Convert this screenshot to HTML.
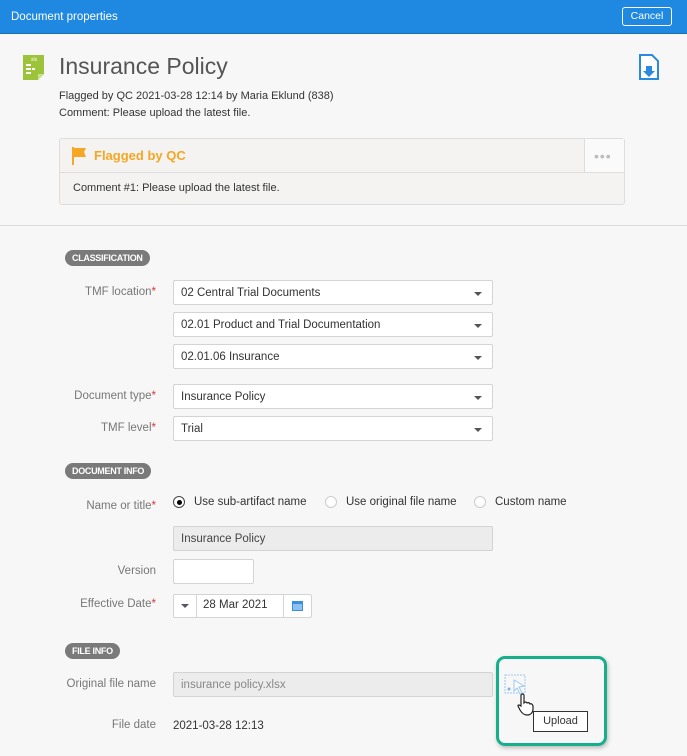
<!DOCTYPE html>
<html><head><style>
body{margin:0;width:687px;height:756px;background:#f7f7f7;font-family:"Liberation Sans",sans-serif;position:relative;overflow:hidden;color:#333}
.a{position:absolute}
.hdr{left:0;top:0;width:687px;height:33px;background:#1f88e0;border-bottom:1px solid #1a6fb8}
.pill{background:#7a7a7a;color:#fff;font-size:9px;font-weight:bold;height:16px;line-height:16px;border-radius:8px;padding:0 7px;letter-spacing:-.3px}
.lbl{font-size:11.5px;color:#777;text-align:right;width:120px;left:36px}
.lbl b{color:#d9343a;font-weight:normal}
.sel{left:173px;background:#fff;border:1px solid #d4d4d4;border-radius:2px;font-size:11.5px;line-height:24px;padding-left:7px;box-sizing:border-box;width:320px;height:25px}
.sel:after{content:"";position:absolute;right:10px;top:11px;border-left:4px solid transparent;border-right:4px solid transparent;border-top:4px solid #555}
.sel.n:after{display:none}
.rad{width:12px;height:12px;border:1px solid #ccc;border-radius:50%;background:#fff;box-sizing:border-box}
.t{font-size:11.5px}
</style></head><body>
<div class="a hdr"></div>
<div class="a" style="left:11px;top:11px;color:#fff;font-size:11.5px">Document properties</div>
<div class="a" style="left:622px;top:7px;width:50px;height:19px;border:1px solid #fff;border-radius:3px;box-sizing:border-box;color:#fff;font-size:10.5px;text-align:center;line-height:17px">Cancel</div>

<svg class="a" style="left:23px;top:55px" width="21" height="25"><path d="M0 0H21V19L15 25H0Z" fill="#9dc33b"/><path d="M21 19L15 25V19Z" fill="#c8e08a"/><rect x="3" y="9" width="5" height="2" fill="#fff"/><rect x="3" y="13" width="5" height="2" fill="#fff"/><rect x="3" y="17" width="5" height="2" fill="#fff"/><rect x="9" y="13" width="3" height="2" fill="#fff"/><text x="8" y="6" font-size="5" fill="#fff" font-family="Liberation Sans">xls</text></svg>
<div class="a" style="left:59px;top:53px;font-size:23px;color:#555">Insurance Policy</div>
<svg class="a" style="left:638px;top:54px" width="22" height="26"><path d="M2 1H14L20 7V25H2Z" fill="#fff" stroke="#2a8ae0" stroke-width="2"/><path d="M8 12H14V17H17L11 23L5 17H8Z" fill="#2a8ae0"/></svg>
<div class="a t" style="left:59px;top:90px;font-size:11px">Flagged by QC 2021-03-28 12:14 by Maria Eklund (838)</div>
<div class="a t" style="left:59px;top:107px;font-size:11px">Comment: Please upload the latest file.</div>

<div class="a" style="left:59px;top:138px;width:566px;height:67px;border:1px solid #ddd;border-radius:3px;box-sizing:border-box;background:#f4f3f2"></div>
<div class="a" style="left:60px;top:172px;width:564px;height:1px;background:#ddd"></div>
<div class="a" style="left:584px;top:139px;width:1px;height:33px;background:#ddd"></div>
<div class="a" style="left:585px;top:139px;width:39px;height:33px;background:#fafafa"></div>
<div class="a" style="left:594px;top:148px;color:#bbb;font-size:14px;letter-spacing:1px">•••</div>
<svg class="a" style="left:72px;top:147px" width="16" height="18"><rect x="0" y="0" width="2" height="18" fill="#f5a623"/><path d="M2 1H14L12 5L14 10H2Z" fill="#f5a623"/></svg>
<div class="a" style="left:94px;top:148px;color:#f5a623;font-size:13px;font-weight:bold">Flagged by QC</div>
<div class="a t" style="left:73px;top:182px;font-size:11px">Comment #1: Please upload the latest file.</div>

<div class="a" style="left:0;top:225px;width:687px;height:1px;background:#ddd"></div>

<div class="a pill" style="left:65px;top:250px">CLASSIFICATION</div>
<div class="a lbl" style="top:286px">TMF location<b>*</b></div>
<div class="a sel" style="top:280px">02 Central Trial Documents</div>
<div class="a sel" style="top:312px">02.01 Product and Trial Documentation</div>
<div class="a sel" style="top:344px">02.01.06 Insurance</div>
<div class="a lbl" style="top:390px">Document type<b>*</b></div>
<div class="a sel" style="top:384px">Insurance Policy</div>
<div class="a lbl" style="top:422px">TMF level<b>*</b></div>
<div class="a sel" style="top:416px">Trial</div>

<div class="a pill" style="left:65px;top:463px">DOCUMENT INFO</div>
<div class="a lbl" style="top:500px">Name or title<b>*</b></div>
<div class="a rad" style="left:173px;top:496px;border-color:#444"></div><div class="a" style="left:177px;top:500px;width:5px;height:5px;border-radius:50%;background:#000"></div>
<div class="a t" style="left:194px;top:496px">Use sub-artifact name</div>
<div class="a rad" style="left:325px;top:496px"></div>
<div class="a t" style="left:346px;top:496px">Use original file name</div>
<div class="a rad" style="left:474px;top:496px"></div>
<div class="a t" style="left:495px;top:496px">Custom name</div>
<div class="a sel n" style="top:526px;background:#ececec;color:#444">Insurance Policy</div>
<div class="a lbl" style="top:565px">Version</div>
<div class="a" style="left:173px;top:559px;width:81px;height:25px;border:1px solid #d4d4d4;border-radius:2px;background:#fff;box-sizing:border-box"></div>
<div class="a lbl" style="top:598px">Effective Date<b>*</b></div>
<div class="a" style="left:173px;top:594px;width:139px;height:24px;border:1px solid #d4d4d4;border-radius:2px;background:#fff;box-sizing:border-box"></div>
<div class="a" style="left:196px;top:594px;width:1px;height:24px;background:#d4d4d4"></div>
<div class="a" style="left:283px;top:594px;width:1px;height:24px;background:#d4d4d4"></div>
<div class="a" style="left:181px;top:604px;border-left:4px solid transparent;border-right:4px solid transparent;border-top:4px solid #556"></div>
<div class="a t" style="left:203px;top:599px">28 Mar 2021</div>
<svg class="a" style="left:292px;top:600px" width="11" height="11"><rect x="0" y="1" width="11" height="10" fill="#3b8fe0"/><rect x="1" y="4" width="9" height="6" fill="#8cc0f0"/></svg>

<div class="a pill" style="left:65px;top:643px">FILE INFO</div>
<div class="a lbl" style="top:678px">Original file name</div>
<div class="a sel n" style="top:672px;background:#ececec;color:#888">insurance policy.xlsx</div>
<div class="a lbl" style="top:719px">File date</div>
<div class="a t" style="left:173px;top:720px">2021-03-28 12:13</div>

<div class="a" style="left:496px;top:656px;width:111px;height:90px;border:3px solid #17ae8c;border-radius:9px;box-sizing:border-box;box-shadow:1px 2px 4px rgba(0,0,0,.25)"></div>
<svg class="a" style="left:504px;top:674px" width="24" height="22"><rect x="1" y="1" width="20" height="18" fill="none" stroke="#9cc7ef" stroke-dasharray="2,1"/><path d="M10 6L20 12L15 13L18 19L16 20L13 14L10 17Z" fill="#fff" stroke="#9cc7ef"/><circle cx="5" cy="15" r="1.5" fill="#7ab0e8"/></svg>
<svg class="a" style="left:516px;top:693px" width="20" height="24"><path d="M5 2Q7 0 8 2V10Q10 8 11 10Q13 9 14 11Q16 10 17 13V17Q16 22 11 22Q7 22 4 17L2 13Q2 11 5 13Z" fill="#fff" stroke="#222" stroke-width="1.2"/></svg>
<div class="a" style="left:533px;top:711px;width:55px;height:21px;border:1px solid #333;background:#fff;box-sizing:border-box;font-size:11px;line-height:19px;text-align:center;color:#333">Upload</div>
</body></html>
